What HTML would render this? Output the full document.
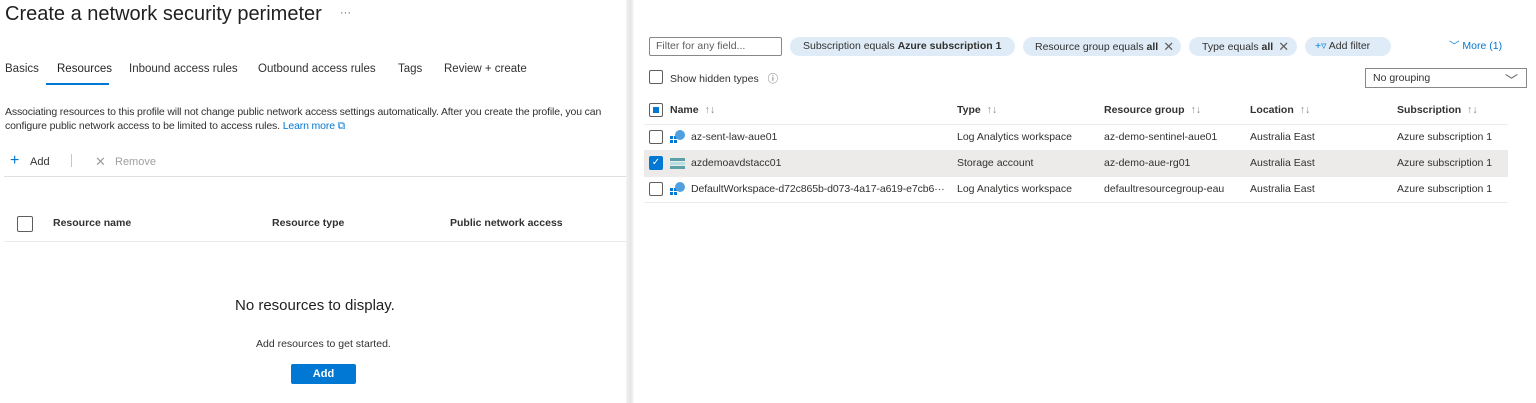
<!DOCTYPE html>
<html><head><meta charset="utf-8"><style>
*{margin:0;padding:0;box-sizing:border-box}
body{width:1536px;height:403px;overflow:hidden;background:#fff;font-family:"Liberation Sans",sans-serif;color:#323130;position:relative;font-size:10.5px}
.a{position:absolute;white-space:nowrap}
.cb{position:absolute;width:14px;height:14px;border:1px solid #605e5c;border-radius:2px;background:#fff}
.chip{position:absolute;height:19px;border-radius:10px;background:#dfecf7;font-size:10.5px;line-height:19px;padding:0 12px;white-space:nowrap;overflow:hidden}
.hd{font-weight:bold;font-size:10.5px}
.ar{color:#8a8886;font-weight:normal;margin-left:6px}
.row{position:absolute;left:644px;width:864px;height:26px;border-bottom:1px solid #edebe9}
.x{color:#605e5c;font-size:13px;margin-left:5px;vertical-align:-1px}
</style></head><body>
<div class="a" style="left:5px;top:3px;font-size:20px;color:#201f1e">Create a network security perimeter</div>
<div class="a" style="left:340px;top:7px;font-size:11px;color:#605e5c">···</div>
<div class="a" style="left:5px;top:63px;font-size:11.5px">Basics</div>
<div class="a" style="left:57px;top:63px;font-size:11.5px;color:#201f1e">Resources</div>
<div class="a" style="left:46px;top:83px;width:63px;height:2px;background:#0078d4"></div>
<div class="a" style="left:129px;top:63px;font-size:11.5px">Inbound access rules</div>
<div class="a" style="left:258px;top:63px;font-size:11.5px">Outbound access rules</div>
<div class="a" style="left:398px;top:63px;font-size:11.5px">Tags</div>
<div class="a" style="left:444px;top:63px;font-size:11.5px">Review + create</div>
<div class="a" style="left:5px;top:105px;font-size:10.5px;line-height:14px;letter-spacing:-0.15px">Associating resources to this profile will not change public network access settings automatically. After you create the profile, you can<br>configure public network access to be limited to access rules. <span style="color:#0078d4">Learn more ⧉</span></div>
<div class="a" style="left:10px;top:152px;font-size:16px;color:#0078d4">+</div>
<div class="a" style="left:30px;top:156px;font-size:11px">Add</div>
<div class="a" style="left:71px;top:154px;width:1px;height:13px;background:#c8c6c4"></div>
<div class="a" style="left:95px;top:154px;font-size:13px;color:#a19f9d">✕</div>
<div class="a" style="left:115px;top:156px;font-size:11px;color:#a19f9d">Remove</div>
<div class="a" style="left:4px;top:176px;width:624px;height:1px;background:#e1dfdd"></div>
<div class="cb" style="left:17px;top:216px;width:16px;height:16px"></div>
<div class="a hd" style="left:53px;top:217px">Resource name</div>
<div class="a hd" style="left:272px;top:217px">Resource type</div>
<div class="a hd" style="left:450px;top:217px">Public network access</div>
<div class="a" style="left:4px;top:241px;width:624px;height:1px;background:#edebe9"></div>
<div class="a" style="left:235px;top:297px;font-size:15px;color:#201f1e">No resources to display.</div>
<div class="a" style="left:256px;top:338px;font-size:10.5px">Add resources to get started.</div>
<div class="a" style="left:291px;top:364px;width:65px;height:20px;background:#0078d4;border-radius:2px;color:#fff;font-size:11px;font-weight:bold;text-align:center;line-height:20px">Add</div>
<div class="a" style="left:626px;top:0;width:8px;height:403px;background:linear-gradient(90deg,#f3f2f1,#e5e5e5 60%,#fafafa)"></div>

<div class="a" style="left:649px;top:37px;width:133px;height:19px;border:1px solid #8a8886;border-radius:2px;font-size:10.5px;color:#605e5c;padding:2px 6px">Filter for any field...</div>
<div class="chip" style="left:790px;top:37px;width:225px;padding-left:13px">Subscription equals <b>Azure subscription 1</b></div>
<div class="chip" style="left:1023px;top:37px;width:158px">Resource group equals <b>all</b><span class="x">✕</span></div>
<div class="chip" style="left:1189px;top:37px;width:108px;padding-left:13px">Type equals <b>all</b><span class="x">✕</span></div>
<div class="chip" style="left:1305px;top:37px;width:86px;padding-left:10px"><span style="color:#0078d4">+▿</span> Add filter</div>
<div class="a" style="left:1449px;top:38px;font-size:10.5px;color:#0078d4">﹀ More (1)</div>
<div class="cb" style="left:649px;top:70px"></div>
<div class="a" style="left:670px;top:71px">Show hidden types <span style="color:#605e5c;margin-left:6px">ⓘ</span></div>
<div class="a" style="left:1365px;top:68px;width:162px;height:20px;border:1px solid #8a8886;padding:3px 7px;font-size:10.5px">No grouping<span style="position:absolute;right:8px;top:1px;font-size:13px;color:#605e5c">﹀</span></div>
<div class="cb" style="left:649px;top:103px"><div style="position:absolute;left:3px;top:3px;width:6px;height:6px;background:#0078d4"></div></div>
<div class="a hd" style="left:670px;top:104px">Name<span class="ar">↑↓</span></div>
<div class="a hd" style="left:957px;top:104px">Type<span class="ar">↑↓</span></div>
<div class="a hd" style="left:1104px;top:104px">Resource group<span class="ar">↑↓</span></div>
<div class="a hd" style="left:1250px;top:104px">Location<span class="ar">↑↓</span></div>
<div class="a hd" style="left:1397px;top:104px">Subscription<span class="ar">↑↓</span></div>
<div class="a" style="left:644px;top:124px;width:864px;height:1px;background:#edebe9"></div>
<div class="row" style="top:125px"></div>
<div class="row" style="top:151px;background:#edebe9"></div>
<div class="row" style="top:177px"></div>
<div class="cb" style="left:649px;top:130px"></div>
<div class="cb" style="left:649px;top:156px;background:#0078d4;border-color:#0078d4;color:#fff;font-size:10px;line-height:12px;text-align:center">✓</div>
<div class="cb" style="left:649px;top:182px"></div>
<svg class="a" style="left:670px;top:130px" width="15" height="14"><rect x="0" y="6" width="3" height="3" fill="#0078d4"/><rect x="4" y="6" width="3" height="3" fill="#0078d4"/><rect x="0" y="10" width="3" height="3" fill="#0078d4"/><rect x="4" y="10" width="3" height="3" fill="#0078d4"/><circle cx="10" cy="5" r="5" fill="#50a0e0"/></svg>
<svg class="a" style="left:670px;top:157px" width="15" height="13"><rect y="1" width="15" height="3" fill="#5ea0a8"/><rect y="5" width="15" height="3" fill="#b7dfe0"/><rect y="9" width="15" height="3" fill="#5ea0a8"/></svg>
<svg class="a" style="left:670px;top:182px" width="15" height="14"><rect x="0" y="6" width="3" height="3" fill="#0078d4"/><rect x="4" y="6" width="3" height="3" fill="#0078d4"/><rect x="0" y="10" width="3" height="3" fill="#0078d4"/><rect x="4" y="10" width="3" height="3" fill="#0078d4"/><circle cx="10" cy="5" r="5" fill="#50a0e0"/></svg>
<div class="a" style="left:691px;top:131px">az-sent-law-aue01</div>
<div class="a" style="left:691px;top:157px">azdemoavdstacc01</div>
<div class="a" style="left:691px;top:183px;width:258px;overflow:hidden;letter-spacing:-0.1px">DefaultWorkspace-d72c865b-d073-4a17-a619-e7cb6···</div>
<div class="a" style="left:957px;top:131px">Log Analytics workspace</div>
<div class="a" style="left:957px;top:157px">Storage account</div>
<div class="a" style="left:957px;top:183px">Log Analytics workspace</div>
<div class="a" style="left:1104px;top:131px">az-demo-sentinel-aue01</div>
<div class="a" style="left:1104px;top:157px">az-demo-aue-rg01</div>
<div class="a" style="left:1104px;top:183px">defaultresourcegroup-eau</div>
<div class="a" style="left:1250px;top:131px">Australia East</div>
<div class="a" style="left:1250px;top:157px">Australia East</div>
<div class="a" style="left:1250px;top:183px">Australia East</div>
<div class="a" style="left:1397px;top:131px">Azure subscription 1</div>
<div class="a" style="left:1397px;top:157px">Azure subscription 1</div>
<div class="a" style="left:1397px;top:183px">Azure subscription 1</div>
</body></html>
